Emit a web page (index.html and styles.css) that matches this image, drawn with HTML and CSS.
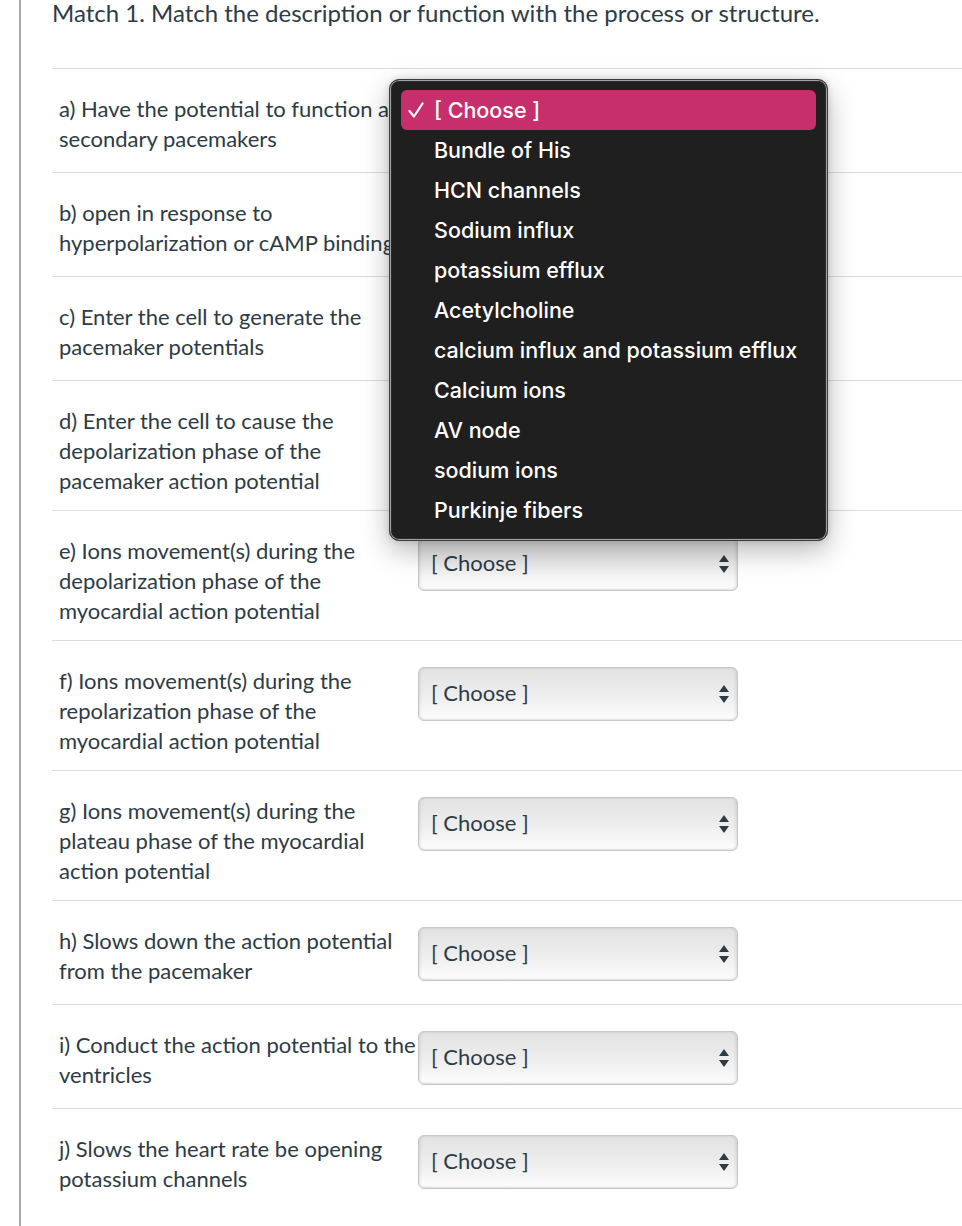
FILE: index.html
```html
<!DOCTYPE html>
<html>
<head>
<meta charset="utf-8">
<link rel="stylesheet" href="styles.css">
</head>
<body>
<div class="page">
  <div class="rule"></div>
  <div class="question">
    <h2 class="title">Match 1. Match the description or function with the process or structure.</h2>
    <div class="answers">
      <div class="row">
        <div class="label">a) Have the potential to function as secondary pacemakers</div>
        <div class="select"><span>[ Choose ]</span><span class="arrows"></span></div>
      </div>
      <div class="row">
        <div class="label">b) open in response to hyperpolarization or cAMP binding</div>
        <div class="select"><span>[ Choose ]</span><span class="arrows"></span></div>
      </div>
      <div class="row">
        <div class="label">c) Enter the cell to generate the pacemaker potentials</div>
        <div class="select"><span>[ Choose ]</span><span class="arrows"></span></div>
      </div>
      <div class="row">
        <div class="label">d) Enter the cell to cause the depolarization phase of the pacemaker action potential</div>
        <div class="select"><span>[ Choose ]</span><span class="arrows"></span></div>
      </div>
      <div class="row">
        <div class="label">e) Ions movement(s) during the depolarization phase of the myocardial action potential</div>
        <div class="select"><span>[ Choose ]</span><span class="arrows"></span></div>
      </div>
      <div class="row">
        <div class="label">f) Ions movement(s) during the repolarization phase of the myocardial action potential</div>
        <div class="select"><span>[ Choose ]</span><span class="arrows"></span></div>
      </div>
      <div class="row">
        <div class="label">g) Ions movement(s) during the plateau phase of the myocardial action potential</div>
        <div class="select"><span>[ Choose ]</span><span class="arrows"></span></div>
      </div>
      <div class="row">
        <div class="label">h) Slows down the action potential from the pacemaker</div>
        <div class="select"><span>[ Choose ]</span><span class="arrows"></span></div>
      </div>
      <div class="row">
        <div class="label">i) Conduct the action potential to the ventricles</div>
        <div class="select"><span>[ Choose ]</span><span class="arrows"></span></div>
      </div>
      <div class="row">
        <div class="label">j) Slows the heart rate be opening potassium channels</div>
        <div class="select"><span>[ Choose ]</span><span class="arrows"></span></div>
      </div>

      <div class="menu">
        <div class="item selected"><svg class="check" width="16" height="18" viewBox="0 0 16 18"><polyline points="1.5,10 6,15.5 14.5,2.5" fill="none" stroke="#ffffff" stroke-width="2.2" stroke-linecap="round" stroke-linejoin="round"/></svg>[ Choose ]</div>
        <div class="item">Bundle of His</div>
        <div class="item">HCN channels</div>
        <div class="item">Sodium influx</div>
        <div class="item">potassium efflux</div>
        <div class="item">Acetylcholine</div>
        <div class="item">calcium influx and potassium efflux</div>
        <div class="item">Calcium ions</div>
        <div class="item">AV node</div>
        <div class="item">sodium ions</div>
        <div class="item">Purkinje fibers</div>
      </div>
    </div>
  </div>
</div>
</body>
</html>
```

FILE: styles.css
```css
html, body {
  margin: 0;
  padding: 0;
  background: #ffffff;
}

body {
  font-family: Lato, "Liberation Sans", sans-serif;
  color: #2d3b45;
  overflow: hidden;
}

.page {
  display: flex;
  min-height: 1226px;
}

.rule {
  width: 2px;
  margin-left: 19px;
  background: #a9a9a9;
  flex: none;
}

.question {
  flex: 1;
  padding-left: 31px;
}

.title {
  margin: -2px 0 0 0;
  height: 70px;
  font-size: 24px;
  font-weight: 400;
  line-height: 30px;
  color: #2d3b45;
  white-space: nowrap;
}

.answers {
  position: relative;
}

.row {
  display: flex;
  align-items: flex-start;
  border-top: 1px solid #dcdcdc;
  padding: 25px 0 14px 7px;
}

.label {
  width: 359px;
  flex: none;
  font-size: 22px;
  line-height: 30px;
  color: #2d3b45;
}

.select {
  width: 320px;
  height: 54px;
  box-sizing: border-box;
  flex: none;
  margin-top: 1px;
  margin-bottom: 9px;
  border: 1px solid #c6c6c6;
  border-radius: 6px;
  background: linear-gradient(#e2e2e2, #eeeeee 55%, #fdfdfd);
  box-shadow: inset 0 -1px 2px rgba(0,0,0,0.08), inset 2px 0 3px rgba(0,0,0,0.05), inset -2px 0 3px rgba(0,0,0,0.06);
  display: flex;
  align-items: center;
  justify-content: space-between;
  padding: 0 8px 0 12px;
  font-size: 22px;
  color: #2d3b45;
}

.select span:first-child {
  margin-top: -4px;
}

.arrows {
  position: relative;
  width: 10px;
  height: 18px;
}

.arrows::before,
.arrows::after {
  content: "";
  position: absolute;
  left: 0;
  border-left: 5px solid transparent;
  border-right: 5px solid transparent;
}

.arrows::before {
  top: 0;
  border-bottom: 7.5px solid #2d3b45;
}

.arrows::after {
  bottom: 0;
  border-top: 7.5px solid #2d3b45;
}

.menu {
  position: absolute;
  left: 337px;
  top: 11px;
  width: 415px;
  padding: 10px 11px;
  background: #1f1f1f;
  border: 1px solid #3c3c3c;
  border-radius: 10px;
  box-shadow: inset 0 0 0 1px #a3a3a3, inset 0 0 0 2px #2a2a2a, 0 10px 28px rgba(0,0,0,0.28), 0 0 6px rgba(0,0,0,0.15);
  font-family: Inter, "Noto Sans", sans-serif;
  font-size: 21.5px;
  color: #ffffff;
}

.item {
  height: 40px;
  line-height: 40px;
  padding-left: 33px;
  border-radius: 6px;
  position: relative;
  white-space: nowrap;
  font-weight: 500;
}

.item.selected {
  background: #c72e6c;
}

.check {
  position: absolute;
  left: 7px;
  top: 11px;
}
```
